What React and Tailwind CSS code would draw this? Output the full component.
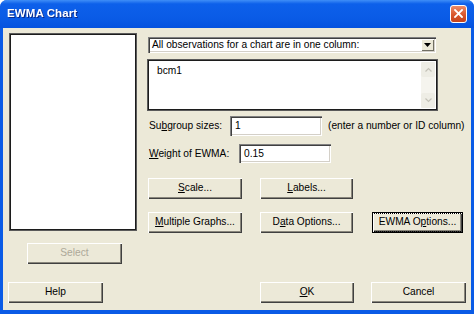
import clsx from 'clsx';

const font = { fontFamily: '"Liberation Sans", Arial, sans-serif' };

const sunken =
    'bg-white shadow-[inset_1px_1px_0_#808080,inset_2px_2px_0_#404040,inset_-1px_-1px_0_#ffffff,inset_-2px_-2px_0_#d4d0c8]';
const framed = 'bg-white shadow-[inset_0_0_0_1px_#5a5a5a,inset_0_0_0_2px_#1c1c1c]';

function Btn({ children, className, disabled, isDefault }) {
    return (
        <button
            type="button"
            className={clsx(
                'flex items-center justify-center whitespace-nowrap bg-[#ece9d8] text-[10.2px] leading-none',
                isDefault
                    ? 'border border-black shadow-[inset_1px_1px_0_#ffffff,inset_-1px_-1px_0_#404040,inset_-2px_-2px_0_#8a877c]'
                    : 'shadow-[inset_1px_1px_0_#ffffff,inset_-1px_-1px_0_#404040,inset_-2px_-2px_0_#8a877c]',
                disabled ? 'text-[#aca899]' : 'text-black',
                className
            )}
        >
            {isDefault ? (
                <span className="border border-dotted border-black px-[6px] py-[3px]">{children}</span>
            ) : (
                children
            )}
        </button>
    );
}

const U = ({ children }) => <span className="underline underline-offset-[1px]">{children}</span>;

function Chevron({ up }) {
    return (
        <svg width="7" height="5" viewBox="0 0 7 5" className="block">
            <path
                d={up ? 'M0.5 4.5 L3.5 1.5 L6.5 4.5' : 'M0.5 0.5 L3.5 3.5 L6.5 0.5'}
                fill="none"
                stroke="#c4c2b8"
                strokeWidth="1.2"
            />
        </svg>
    );
}

export default function App() {
    return (
        <div
            style={font}
            className="w-[474px] h-[314px] flex flex-col bg-[#0a5be6] rounded-t-[7px] overflow-hidden"
        >
            {/* title bar */}
            <div className="h-[28px] flex items-center justify-between pl-[7px] pr-[7px] bg-[linear-gradient(to_bottom,#3f8ef7_0%,#0d60ea_14%,#0a5be6_65%,#0552df_100%)]">
                <span className="text-white font-bold text-[11.5px] tracking-[0.1px] drop-shadow-[1px_1px_0_#0a2a8a]">
                    EWMA Chart
                </span>
                <div className="w-[17px] h-[18px] rounded-[3px] border border-white bg-[linear-gradient(to_bottom,#ec8b67,#d9562c_55%,#c4421b)] flex items-center justify-center mb-[1px]">
                    <svg width="9" height="9" viewBox="0 0 9 9">
                        <path d="M1 1 L8 8 M8 1 L1 8" stroke="#fff" strokeWidth="1.8" strokeLinecap="square" />
                    </svg>
                </div>
            </div>

            {/* client area */}
            <div className="flex-1 mx-[3px] mb-[4px] bg-[#ece9d8] flex flex-col pt-[5px] text-[10.2px] text-black">
                <div className="flex">
                    {/* left column */}
                    <div className="ml-[6px] w-[128px] flex flex-col">
                        <div className={clsx(framed, 'h-[198px]')} />
                        <Btn disabled className="mt-[12px] ml-[18px] w-[95px] h-[21px]">
                            Select
                        </Btn>
                    </div>

                    {/* right column */}
                    <div className="ml-[10px] flex flex-col">
                        <div className={clsx(sunken, 'mt-[4px] ml-[1px] w-[288px] h-[16px] flex items-center pl-[4px] pr-[2px]')}>
                            <span className="flex-1 leading-none">All observations for a chart are in one column:</span>
                            <div className="w-[13px] h-[12px] bg-[#ece9d8] shadow-[inset_1px_1px_0_#ffffff,inset_-1px_-1px_0_#716f64] flex items-center justify-center">
                                <svg width="7" height="4" viewBox="0 0 7 4">
                                    <path d="M0 0 H7 L3.5 4 Z" fill="#000" />
                                </svg>
                            </div>
                        </div>

                        <div className={clsx(framed, 'mt-[6px] w-[291px] h-[52px] flex')}>
                            <span className="flex-1 pl-[10px] pt-[7px] leading-none">bcm1</span>
                            <div className="w-[14px] my-[3px] mr-[3px] flex flex-col justify-between bg-[#f5f4ee]">
                                <div className="h-[15px] bg-[#eeede5] rounded-[2px] flex items-center justify-center">
                                    <Chevron up />
                                </div>
                                <div className="h-[15px] bg-[#eeede5] rounded-[2px] flex items-center justify-center">
                                    <Chevron />
                                </div>
                            </div>
                        </div>

                        <div className="mt-[5px] flex items-center">
                            <span className="w-[83px] pl-[2px]">
                                Su<U>b</U>group sizes:
                            </span>
                            <div className={clsx(sunken, 'w-[92px] h-[20px] flex items-center pl-[5px]')}>1</div>
                            <span className="ml-[6px]">(enter a number or ID column)</span>
                        </div>

                        <div className="mt-[8px] flex items-center">
                            <span className="w-[92px] pl-[2px]">
                                <U>W</U>eight of EWMA:
                            </span>
                            <div className={clsx(sunken, 'w-[92px] h-[19px] flex items-center pl-[5px]')}>0.15</div>
                        </div>

                        <div className="mt-[15px] flex">
                            <Btn className="ml-[1px] w-[94px] h-[21px]">
                                <U>S</U>cale...
                            </Btn>
                            <Btn className="ml-[18px] w-[93px] h-[21px]">
                                <U>L</U>abels...
                            </Btn>
                        </div>

                        <div className="mt-[13px] flex">
                            <Btn className="ml-[1px] w-[94px] h-[21px]">
                                <U>M</U>ultiple Graphs...
                            </Btn>
                            <Btn className="ml-[18px] w-[93px] h-[21px]">
                                D<U>a</U>ta Options...
                            </Btn>
                            <Btn isDefault className="ml-[19px] w-[91px] h-[21px]">
                                EWMA O<U>p</U>tions...
                            </Btn>
                        </div>
                    </div>
                </div>

                {/* bottom buttons */}
                <div className="mt-auto mb-[7px] flex">
                    <Btn className="ml-[5px] w-[95px] h-[21px]">Help</Btn>
                    <Btn className="ml-[157px] w-[94px] h-[21px]">
                        <U>O</U>K
                    </Btn>
                    <Btn className="ml-[17px] w-[95px] h-[21px]">Cancel</Btn>
                </div>
            </div>
        </div>
    );
}
